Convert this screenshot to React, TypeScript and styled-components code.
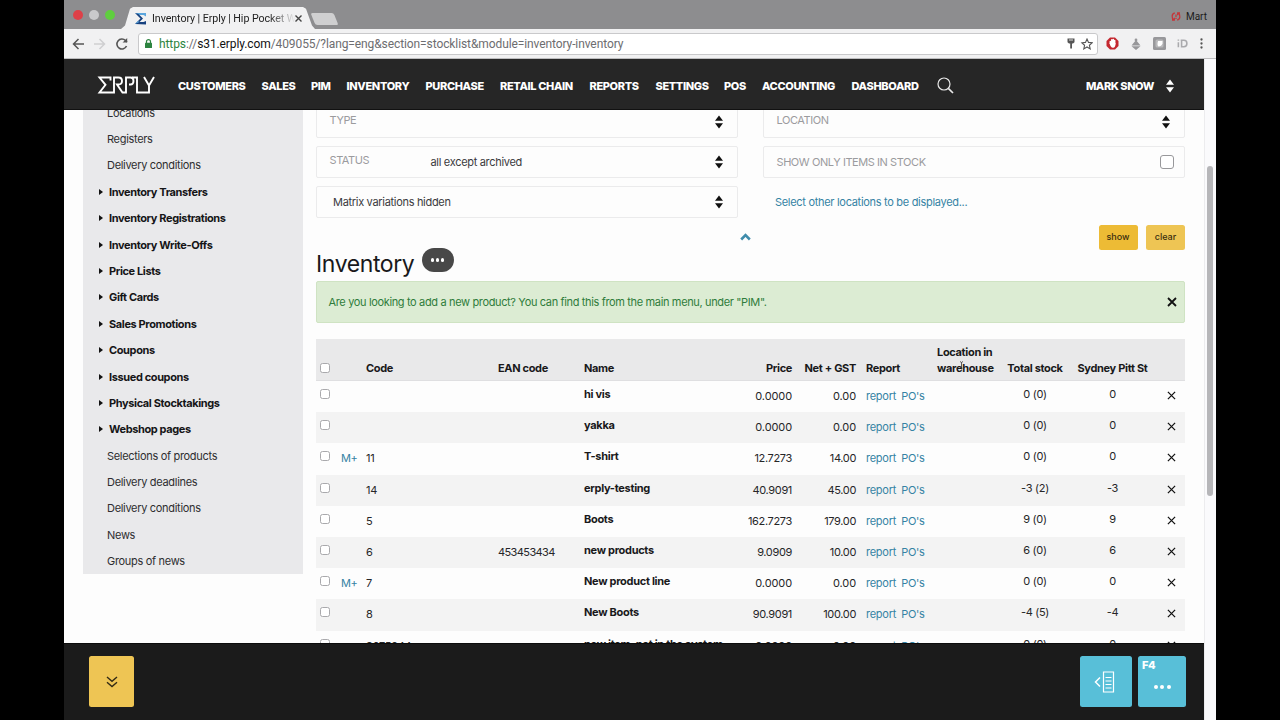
import React from 'react';
import styled, { createGlobalStyle } from 'styled-components';

const GlobalStyle = createGlobalStyle`
  * { box-sizing: border-box; }
  html, body { margin: 0; padding: 0; background: #000; }
  body { font-family: Inter, "Liberation Sans", sans-serif; font-size: 11px; color: #1d1d1f; }
`;

const Screen = styled.div`
  width: 1280px;
  height: 720px;
  padding: 0 64px;
  background: #000;
  overflow: hidden;
`;

const BrowserWindow = styled.div`
  display: flex;
  flex-direction: column;
  height: 720px;
  background: #fdfdfd;
`;

/* Browser chrome */

const TabStrip = styled.div`
  display: flex;
  align-items: flex-end;
  height: 29px;
  background: #8d8d8f;
  font-family: Roboto, sans-serif;
`;

const Lights = styled.div`
  display: flex;
  gap: 6px;
  width: 57px;
  padding: 0 0 9px 9px;
`;

const Light = styled.i<{ $color: string }>`
  width: 10px;
  height: 10px;
  border-radius: 50%;
  background: ${(p) => p.$color};
`;

const Tab = styled.div`
  display: flex;
  align-items: center;
  width: 194px;
  height: 22px;
  padding: 0 13px 0 13px;
  background: #f1f1f2;
  clip-path: polygon(0 100%, 4px 84%, 9px 8%, 12px 0, 182px 0, 185px 8%, 191px 84%, 100% 100%);
`;

const TabTitle = styled.span`
  flex: 1;
  margin-left: 5px;
  overflow: hidden;
  white-space: nowrap;
  font-size: 10.7px;
  letter-spacing: -0.08px;
  color: #222;
  mask-image: linear-gradient(90deg, #000 82%, transparent 100%);
`;

const NewTab = styled.div`
  width: 23px;
  height: 12px;
  margin: 0 0 4px -2px;
  border-radius: 2px;
  background: #cfcfd0;
  transform: skewX(22deg);
`;

const Profile = styled.div`
  display: flex;
  align-items: center;
  gap: 5px;
  margin-left: auto;
  padding: 0 9px 7px 0;
  font-size: 10px;
  color: #1b1b1b;
`;

const Toolbar = styled.div`
  display: flex;
  align-items: center;
  height: 30px;
  padding: 0 13px 0 8px;
  background: #f1f1f2;
  border-bottom: 1px solid #bdbdbf;
`;

const NavButtons = styled.div`
  display: flex;
  gap: 8px;
  width: 66px;
  margin-left: -1px;
`;

const AddressBar = styled.div`
  display: flex;
  align-items: center;
  width: 960px;
  height: 22px;
  margin-left: 1px;
  padding: 0 4px 0 6px;
  border: 1px solid #c9c9cb;
  border-radius: 3px;
  background: #fff;
`;

const Url = styled.div`
  flex: 1;
  margin-left: 7px;
  font-family: Roboto, sans-serif;
  font-size: 12px;
  letter-spacing: -0.095px;
  color: #6d6d70;
  white-space: nowrap;
  b { font-weight: 400; color: #111; }
  em { font-style: normal; color: #2d8440; }
`;

const Extensions = styled.div`
  display: flex;
  align-items: center;
  justify-content: space-between;
  flex: 1;
  margin-left: 8px;
`;

/* Page */

const Viewport = styled.div`
  display: flex;
  height: 661px;
`;

const Page = styled.div`
  display: flex;
  flex-direction: column;
  width: 1140px;
`;

const ScrollTrack = styled.div`
  width: 12px;
  padding: 107px 2px 0;
  background: #fafafc;
  border-left: 1px solid #ececee;
`;

const ScrollThumb = styled.div`
  width: 6px;
  height: 330px;
  border-radius: 3px;
  background: #b6b6b9;
`;

const Header = styled.header`
  display: flex;
  align-items: center;
  height: 51px;
  padding: 3px 29px 0 33px;
  background: #262626;
  border-bottom: 1px solid #111;
  color: #fff;
`;

const Nav = styled.nav`
  display: flex;
  margin-left: 22px;
`;

const NavItem = styled.a<{ $w: number }>`
  width: ${(p) => p.$w}px;
  font-size: 11px;
  font-weight: 800;
  letter-spacing: -0.35px;
  white-space: nowrap;
`;

const User = styled.div`
  display: flex;
  align-items: center;
  gap: 11px;
  margin-left: auto;
  font-weight: 800;
  letter-spacing: -0.45px;
`;

const Main = styled.main`
  display: flex;
  align-items: flex-start;
  flex: 1;
  min-height: 0;
  overflow: hidden;
  padding-left: 19px;
`;

const Sidebar = styled.aside`
  width: 220px;
  margin-top: -10.6px;
  background: #e9e9eb;
  flex-shrink: 0;
`;

const SideItem = styled.a<{ $group?: boolean }>`
  display: flex;
  align-items: center;
  gap: 6px;
  height: 26.4px;
  padding-left: ${(p) => (p.$group ? 16 : 24)}px;
  font-weight: ${(p) => (p.$group ? 700 : 400)};
  letter-spacing: ${(p) => (p.$group ? -0.38 : -0.31)}px;
  color: ${(p) => (p.$group ? '#151517' : '#2e2e30')};
`;

const Arrow = styled.i`
  border-left: 4px solid #111;
  border-top: 3px solid transparent;
  border-bottom: 3px solid transparent;
`;

const Content = styled.section`
  width: 869px;
  margin-left: 13px;
  flex-shrink: 0;
`;

const Filters = styled.div`
  display: grid;
  grid-template-columns: 421.5px 422px;
  column-gap: 25.5px;
  row-gap: 8px;
  margin-top: -4.5px;
`;

const Field = styled.div<{ $indent?: number }>`
  display: flex;
  align-items: center;
  height: 32px;
  padding: 0 13px 0 ${(p) => p.$indent ?? 12.5}px;
  border: 1px solid #ebebec;
  border-radius: 2px;
  letter-spacing: -0.31px;
  color: #3a3a3d;
  svg { margin-left: auto; }
`;

const Label = styled.span<{ $w?: number; $raise?: number }>`
  width: ${(p) => (p.$w ? `${p.$w}px` : 'auto')};
  padding-bottom: ${(p) => p.$raise ?? 0}px;
  letter-spacing: -0.43px;
  color: #9b9b9e;
`;

const BigCheck = styled.i`
  width: 14px;
  height: 14px;
  margin: 0 -2.5px 0 auto;
  border: 1.5px solid #98989b;
  border-radius: 3px;
  background: #fff;
`;

const MoreLocations = styled.a`
  display: flex;
  align-items: center;
  padding-left: 12px;
  color: #3583a4;
  letter-spacing: -0.3px;
`;

const FilterActions = styled.div`
  display: grid;
  grid-template-columns: 1fr auto auto;
  column-gap: 8.5px;
  align-items: center;
  height: 24.5px;
  margin-top: 7.5px;
`;

const CollapseMark = styled.span`
  display: flex;
  padding-left: 424px;
`;

const ActionButton = styled.button<{ $bg: string }>`
  height: 24.5px;
  width: 39px;
  padding: 0 0 1px;
  border: 0;
  border-radius: 2.5px;
  background: ${(p) => p.$bg};
  font: 500 9px Inter, sans-serif;
  color: #3a2d10;
`;

const TitleRow = styled.div`
  display: flex;
  height: 31.5px;
`;

const Title = styled.h1`
  width: 105.5px;
  margin: 0;
  font-size: 23px;
  line-height: 28px;
  font-weight: 400;
  letter-spacing: -0.4px;
  color: #19191b;
`;

const MorePill = styled.span`
  display: flex;
  align-items: center;
  justify-content: center;
  gap: 1.5px;
  width: 32px;
  height: 24px;
  margin-top: -1.5px;
  border-radius: 12px;
  background: #484848;
`;

const Dot = styled.i<{ $size: number }>`
  width: ${(p) => p.$size}px;
  height: ${(p) => p.$size}px;
  border-radius: 50%;
  background: #fff;
`;

const Alert = styled.div`
  display: flex;
  align-items: center;
  justify-content: space-between;
  height: 42px;
  padding: 0 7.5px 1px 11.5px;
  border: 1px solid #cfe3c3;
  border-radius: 2px;
  background: #dcecd3;
  letter-spacing: -0.352px;
  color: #2f7c3b;
`;

const columns = '25px 25px 132px 86px 118px 90px 64px 81px 56px 84px 71px 37px';

const TableHead = styled.div`
  display: grid;
  grid-template-columns: ${columns};
  align-items: end;
  height: 42px;
  margin-top: 16px;
  padding-bottom: 4.5px;
  background: #e9e9ea;
  border-bottom: 1px solid #dfdfe1;
  font-weight: 700;
  line-height: 16px;
  letter-spacing: -0.33px;
  white-space: nowrap;
  color: #19191b;
`;

const Row = styled.div<{ $striped: boolean }>`
  display: grid;
  grid-template-columns: ${columns};
  height: 31.2px;
  background: ${(p) => (p.$striped ? '#f3f3f3' : 'transparent')};
  line-height: 16px;
  white-space: nowrap;
  color: #262628;
`;

const Cell = styled.span<{ $align?: string; $low?: boolean; $bold?: boolean; $left?: number; $track?: number }>`
  padding: ${(p) => (p.$low ? 7 : 5)}px 0 0 ${(p) => p.$left ?? 0}px;
  text-align: ${(p) => p.$align ?? 'left'};
  font-weight: ${(p) => (p.$bold ? 700 : 400)};
  letter-spacing: ${(p) => p.$track ?? (p.$bold ? -0.3 : -0.3)}px;
  color: ${(p) => (p.$bold ? '#19191b' : 'inherit')};
`;

const HeadCell = styled.span<{ $align?: string; $left?: number }>`
  padding-left: ${(p) => p.$left ?? 0}px;
  text-align: ${(p) => p.$align ?? 'left'};
`;

const PointerCell = styled(HeadCell)`
  position: relative;
  svg { position: absolute; left: 22px; top: 17px; }
`;

const Check = styled.i`
  display: block;
  width: 10px;
  height: 10px;
  margin: 3px 0 3px 4px;
  border: 1px solid #a9a9ac;
  border-radius: 2.5px;
  background: #fff;
`;

const Link = styled.a`
  margin-right: 5px;
  color: #3583a4;
`;

const Footer = styled.footer`
  display: flex;
  height: 77px;
  padding: 12px 18px 0 25px;
  gap: 6px;
  background: #1b1b1b;
  border-top: 1px solid #0c0c0c;
`;

const FooterButton = styled.button<{ $w: number; $bg: string }>`
  position: relative;
  display: flex;
  align-items: center;
  justify-content: center;
  gap: 3px;
  width: ${(p) => p.$w}px;
  height: 51px;
  padding: 0;
  border: 0;
  border-radius: 2.5px;
  background: ${(p) => p.$bg};
`;

const Spacer = styled.span`
  flex: 1;
`;

const Shortcut = styled.span`
  position: absolute;
  left: 4px;
  top: 2px;
  font: 800 11px Inter, sans-serif;
  letter-spacing: -0.5px;
  color: #fff;
`;

const DotsRow = styled.span`
  display: flex;
  gap: 2.5px;
  padding-top: 10px;
`;

const Sorter = ({ color = '#111' }: { color?: string }) => (
  <svg width="10" height="14" viewBox="0 0 10 14" fill={color}>
    <path d="M5 .5 9 5.7H1zM5 13.5 9 8.3H1z" />
  </svg>
);

const Cross = ({ size, weight }: { size: number; weight: number }) => (
  <svg width={size} height={size} viewBox="0 0 10 10" stroke="#111" strokeWidth={weight} fill="none">
    <path d="M1 1l8 8M9 1L1 9" />
  </svg>
);

const Logo = () => (
  <svg width="59" height="19" viewBox="0 0 59 19" fill="none" stroke="#fff" strokeWidth="1.9">
    <path d="M13.500 4.500V1.500H2.500L8.500 8.800 2.500 16.500H17V1.500H21.500Q25 1.500 25 5T21.500 8.500H20L25.500 16.500H29V1.500H33.500Q36.500 1.500 36.500 5T33.500 8.500H32" />
    <path d="M35 1.500H40V16.500H52V9.500L57 1M52 9.500L47 1" />
  </svg>
);

const navItems: [string, number][] = [
  ['CUSTOMERS', 83.5], ['SALES', 49.5], ['PIM', 35.5], ['INVENTORY', 79], ['PURCHASE', 74.5],
  ['RETAIL CHAIN', 89.5], ['REPORTS', 66], ['SETTINGS', 68.5], ['POS', 38], ['ACCOUNTING', 89.5], ['DASHBOARD', 85],
];

const sideItems: [string, boolean][] = [
  ['Locations', false], ['Registers', false], ['Delivery conditions', false],
  ['Inventory Transfers', true], ['Inventory Registrations', true], ['Inventory Write-Offs', true],
  ['Price Lists', true], ['Gift Cards', true], ['Sales Promotions', true], ['Coupons', true],
  ['Issued coupons', true], ['Physical Stocktakings', true], ['Webshop pages', true],
  ['Selections of products', false], ['Delivery deadlines', false], ['Delivery conditions', false],
  ['News', false], ['Groups of news', false],
];

const products = [
  { m: '', code: '', ean: '', name: 'hi vis', price: '0.0000', net: '0.00', total: '0 (0)', pitt: '0' },
  { m: '', code: '', ean: '', name: 'yakka', price: '0.0000', net: '0.00', total: '0 (0)', pitt: '0' },
  { m: 'M+', code: '11', ean: '', name: 'T-shirt', price: '12.7273', net: '14.00', total: '0 (0)', pitt: '0' },
  { m: '', code: '14', ean: '', name: 'erply-testing', price: '40.9091', net: '45.00', total: '-3 (2)', pitt: '-3' },
  { m: '', code: '5', ean: '', name: 'Boots', price: '162.7273', net: '179.00', total: '9 (0)', pitt: '9' },
  { m: '', code: '6', ean: '453453434', name: 'new products', price: '9.0909', net: '10.00', total: '6 (0)', pitt: '6' },
  { m: 'M+', code: '7', ean: '', name: 'New product line', price: '0.0000', net: '0.00', total: '0 (0)', pitt: '0' },
  { m: '', code: '8', ean: '', name: 'New Boots', price: '90.9091', net: '100.00', total: '-4 (5)', pitt: '-4' },
  { m: '', code: '8675944', ean: '', name: 'new item, not in the system', price: '0.0000', net: '0.00', total: '0 (0)', pitt: '0' },
];

/* Amounts made mostly of zeros are set slightly wider than the others. */
const amountTrack = (amount: string) => (amount.startsWith('0') ? -0.1 : -0.35);

export default function App() {
  return (
    <>
      <GlobalStyle />
      <Screen>
        <BrowserWindow>
          <TabStrip>
            <Lights>
              <Light $color="#dd4048" />
              <Light $color="#c9c9cb" />
              <Light $color="#5fce3e" />
            </Lights>
            <Tab>
              <svg width="13" height="13" viewBox="0 0 13 13">
                <path d="M1 1h11v3.500L9.500 3H5z" fill="#5aa5dd" />
                <path d="M1 1l5.500 5.500L4 9 1 12l11 .5V9L9.500 10H5.500L9 6.500 4.500 2z" fill="#17417f" />
                <path d="M1 12l3-3 1.500 1z" fill="#5aa5dd" />
              </svg>
              <TabTitle>Inventory | Erply | Hip Pocket W</TabTitle>
              <svg width="7" height="7" viewBox="0 0 7 7" stroke="#444" strokeWidth="1.4"><path d="M.5.5l6 6M6.500.5l-6 6" /></svg>
            </Tab>
            <NewTab />
            <Profile>
              <svg width="10" height="9" viewBox="0 0 10 9" fill="none" stroke="#c5353a" strokeWidth="1.300">
                <path d="M3.800 1C.5 1.500.3 6.500 3 8M1 8h2.300V5.800M6.200 8C9.500 7.500 9.700 2.500 7 1M9 1H6.700v2.200M5 2.500v2.700M5 6v1" />
              </svg>
              Mart
            </Profile>
          </TabStrip>
          <Toolbar>
            <NavButtons>
              <svg width="14" height="14" viewBox="0 0 14 14" fill="none" stroke="#555" strokeWidth="1.500"><path d="M13 7H3M7.500 2L2.500 7l5 5" /></svg>
              <svg width="14" height="14" viewBox="0 0 14 14" fill="none" stroke="#cfcfd1" strokeWidth="1.500"><path d="M1 7h10M6.500 2l5 5-5 5" /></svg>
              <svg width="14" height="14" viewBox="0 0 14 14" fill="none" stroke="#555" strokeWidth="1.600"><path d="M11.500 9A5 5 0 1 1 10.500 3.500L12 5" /><path d="M12.200 1v4.600H7.600z" fill="#555" stroke="none" /></svg>
            </NavButtons>
            <AddressBar>
              <svg width="7" height="9" viewBox="0 0 7 9"><rect y="3.800" width="7" height="5.200" rx=".6" fill="#2d8440" /><path d="M1.500 4V2.600a2 2 0 0 1 4 0V4" fill="none" stroke="#2d8440" strokeWidth="1.200" /></svg>
              <Url><em>https</em>://<b>s31.erply.com</b>/409055/?lang=eng&amp;section=stocklist&amp;module=inventory-inventory</Url>
              <svg width="8" height="11" viewBox="0 0 8 11" fill="#555"><path d="M.5.5h7v3.700L6 5.500H5v5H3.200v-5H2L.5 4.200z" /><path d="M2 2h4" stroke="#fff" strokeWidth=".8" /></svg>
              <svg width="18" height="12" viewBox="-6 0 18 12" fill="none" stroke="#555" strokeWidth="1.100"><path d="M6 1l1.500 3.400 3.600.4-2.700 2.500.8 3.600L6 9l-3.200 1.900.8-3.600L.9 4.800l3.600-.4z" /></svg>
            </AddressBar>
            <Extensions>
              <svg width="13" height="13" viewBox="0 0 13 13"><path d="M4 .5h5L12.500 4v5L9 12.500H4L.5 9V4z" fill="#c4272f" /><path d="M4.300 6.500V4.500M5.800 6V2.800M7.300 6V2.500M8.700 7V3.500" stroke="#fff" strokeWidth="1.500" strokeLinecap="round" /><path d="M3.600 6h5.900Q9.700 10.800 7 10.800T3.600 6z" fill="#fff" /></svg>
              <svg width="10" height="12" viewBox="0 0 10 12" fill="#97979a"><circle cx="5" cy="2" r="1.400" /><path d="M4.200 3h1.600L9.500 7.500H.5zM.5 8.300h9L5 12z" /></svg>
              <svg width="13" height="13" viewBox="0 0 13 13"><rect width="13" height="13" rx="1.500" fill="#98989b" /><rect x="2.500" y="2.500" width="8" height="8" rx="1.500" fill="#b9b9bb" /><path d="M5 4h4.500v2.500Q8.500 9.500 5.500 9.500 3.800 8.500 5 4z" fill="#fff" /></svg>
              <svg width="11" height="9" viewBox="0 0 12 9" fill="none" stroke="#aaaaad" strokeWidth="1.700"><path d="M1.500 3v5.500M1.500 0v1.600M5 1v7h2.500Q10.800 8 10.800 4.500T7.500 1H4" /></svg>
              <svg width="3" height="11" viewBox="0 0 3 11" fill="#555"><circle cx="1.500" cy="1.500" r="1.150" /><circle cx="1.500" cy="5.500" r="1.150" /><circle cx="1.500" cy="9.500" r="1.150" /></svg>
            </Extensions>
          </Toolbar>
          <Viewport>
            <Page>
              <Header>
                <Logo />
                <Nav>
                  {navItems.map(([label, w]) => <NavItem key={label} $w={w}>{label}</NavItem>)}
                </Nav>
                <svg width="17" height="17" viewBox="0 0 17 17" fill="none" stroke="#e8e8e8" strokeWidth="1.200"><circle cx="7" cy="7" r="6" /><path d="M11.300 11.300l4.700 4.700" strokeWidth="1.700" /></svg>
                <User>MARK SNOW<Sorter color="#fff" /></User>
              </Header>
              <Main>
                <Sidebar>
                  {sideItems.map(([label, group], i) => (
                    <SideItem key={i} $group={group}>{group && <Arrow />}{label}</SideItem>
                  ))}
                </Sidebar>
                <Content>
                  <Filters>
                    <Field><Label $raise={3}>TYPE</Label><Sorter /></Field>
                    <Field><Label $raise={3}>LOCATION</Label><Sorter /></Field>
                    <Field><Label $w={101} $raise={3}>STATUS</Label>all except archived<Sorter /></Field>
                    <Field><Label>SHOW ONLY ITEMS IN STOCK</Label><BigCheck /></Field>
                    <Field $indent={16}>Matrix variations hidden<Sorter /></Field>
                    <MoreLocations>Select other locations to be displayed...</MoreLocations>
                  </Filters>
                  <FilterActions>
                    <CollapseMark>
                      <svg width="11" height="8" viewBox="0 0 11 8" fill="none" stroke="#3f8cab" strokeWidth="2.600"><path d="M1.200 6.500l4.300-4.300 4.300 4.300" /></svg>
                    </CollapseMark>
                    <ActionButton $bg="#edbb35">show</ActionButton>
                    <ActionButton $bg="#eec554">clear</ActionButton>
                  </FilterActions>
                  <TitleRow>
                    <Title>Inventory</Title>
                    <MorePill><Dot $size={3.5} /><Dot $size={3.5} /><Dot $size={3.5} /></MorePill>
                  </TitleRow>
                  <Alert>
                    Are you looking to add a new product? You can find this from the main menu, under "PIM".
                    <Cross size={10} weight={1.8} />
                  </Alert>
                  <TableHead>
                    <Check />
                    <HeadCell />
                    <HeadCell>Code</HeadCell>
                    <HeadCell>EAN code</HeadCell>
                    <HeadCell>Name</HeadCell>
                    <HeadCell $align="right">Price</HeadCell>
                    <HeadCell $align="right">Net + GST</HeadCell>
                    <HeadCell $left={10}>Report</HeadCell>
                    <PointerCell>
                      Location in<br />warehouse
                      <svg width="5" height="10" viewBox="0 0 5 10" fill="none" stroke="#333" strokeWidth=".8"><path d="M1 .5l1.500 1L4 .5M2.500 1.500v7" /></svg>
                    </PointerCell>
                    <HeadCell $align="center">Total stock</HeadCell>
                    <HeadCell $align="center">Sydney Pitt St</HeadCell>
                    <HeadCell />
                  </TableHead>
                  {products.map((p, i) => (
                    <Row key={i} $striped={i % 2 === 1}>
                      <Cell><Check /></Cell>
                      <Cell $low $track={-0.5}><Link>{p.m}</Link></Cell>
                      <Cell $low>{p.code}</Cell>
                      <Cell $low $track={-0.6}>{p.ean}</Cell>
                      <Cell $bold>{p.name}</Cell>
                      <Cell $low $align="right" $track={amountTrack(p.price)}>{p.price}</Cell>
                      <Cell $low $align="right" $track={amountTrack(p.net)}>{p.net}</Cell>
                      <Cell $low $left={10} $track={-0.25}><Link>report</Link><Link>PO's</Link></Cell>
                      <Cell />
                      <Cell $align="center">{p.total}</Cell>
                      <Cell $align="center">{p.pitt}</Cell>
                      <Cell $low $align="center" $left={10}><Cross size={9} weight={1.4} /></Cell>
                    </Row>
                  ))}
                </Content>
              </Main>
              <Footer>
                <FooterButton $w={45} $bg="#eec554">
                  <svg width="12" height="12" viewBox="0 0 12 12" fill="none" stroke="#332b15" strokeWidth="1.400"><path d="M1 1l5 4.300L11 1M1 6.200l5 4.300 5-4.300" /></svg>
                </FooterButton>
                <Spacer />
                <FooterButton $w={52} $bg="#58bfd8">
                  <svg width="24" height="22" viewBox="0 0 24 22" fill="none" stroke="#fff" strokeWidth="1.200"><path d="M6 6.500L1.500 11 6 15.500" strokeWidth="1.500" /><path d="M9.500 1h10v20h-10zM11.500 6.500h6M11.500 10h6M11.500 13.500h6M11.500 17h6" /></svg>
                </FooterButton>
                <FooterButton $w={48} $bg="#58bfd8">
                  <Shortcut>F4</Shortcut>
                  <DotsRow><Dot $size={4} /><Dot $size={4} /><Dot $size={4} /></DotsRow>
                </FooterButton>
              </Footer>
            </Page>
            <ScrollTrack><ScrollThumb /></ScrollTrack>
          </Viewport>
        </BrowserWindow>
      </Screen>
    </>
  );
}
